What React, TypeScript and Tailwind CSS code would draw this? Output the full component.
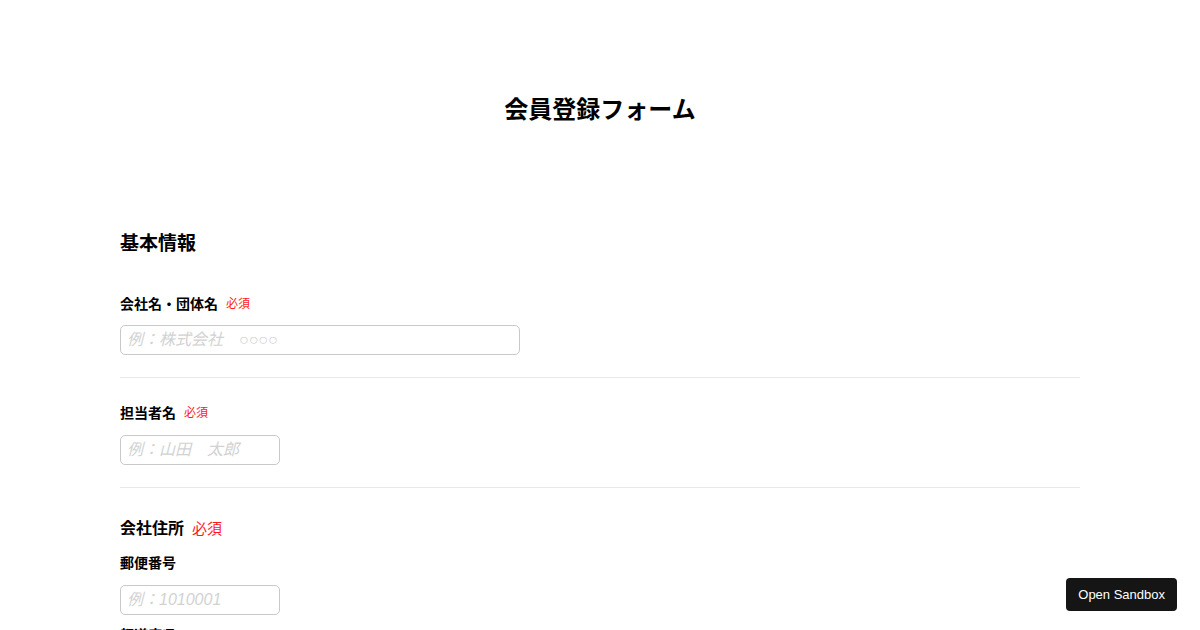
const FONT = { fontFamily: '"Liberation Sans", "Noto Sans CJK JP", sans-serif' }

function Required({ big }: { big?: boolean }) {
  return (
    <span className={`ml-2 font-normal text-[#ff1a1a] ${big ? 'text-[15px]' : 'text-[12px]'}`}>必須</span>
  )
}

function Label({ children, required }: { children: React.ReactNode; required?: boolean }) {
  return (
    <div className="flex h-5 items-center text-[14px] font-bold leading-5 text-black">
      {children}
      {required && <Required />}
    </div>
  )
}

function Input({ placeholder, wide }: { placeholder: string; wide?: boolean }) {
  return (
    <input
      type="text"
      placeholder={placeholder}
      className={`h-[30px] rounded-[5px] border border-[#c9c9c9] bg-white px-[6px] text-[16px] placeholder:italic placeholder:text-[#d2d2d2] focus:outline-none ${
        wide ? 'w-[400px]' : 'w-[160px]'
      }`}
      style={FONT}
    />
  )
}

export default function App() {
  return (
    <div className="min-h-[630px] bg-white text-black" style={FONT}>
      <div className="mx-auto w-[960px] pt-[94px]">
        <h1 className="h-8 text-center text-[24px] font-bold leading-8">会員登録フォーム</h1>

        <h2 className="mt-[105px] h-[26px] text-[19px] font-bold leading-[26px]">基本情報</h2>

        <div className="mt-[37px]">
          <Label required>会社名・団体名</Label>
          <div className="mt-[11px]">
            <Input wide placeholder="例：株式会社　○○○○" />
          </div>
        </div>

        <hr className="mt-[22px] border-t border-[#e8e8e8]" />

        <div className="mt-[25px]">
          <Label required>担当者名</Label>
          <div className="mt-[12px]">
            <Input placeholder="例：山田　太郎" />
          </div>
        </div>

        <hr className="mt-[22px] border-t border-[#e8e8e8]" />

        <div className="mt-[29px]">
          <h3 className="flex h-6 items-center text-[16px] font-bold leading-6">
            会社住所
            <Required big />
          </h3>
          <div className="mt-[12px]">
            <Label>郵便番号</Label>
            <div className="mt-[12px]">
              <Input placeholder="例：1010001" />
            </div>
          </div>
          <div className="mt-[10px]">
            <Label>都道府県</Label>
            <div className="mt-[12px]">
              <Input placeholder="例：東京都" />
            </div>
          </div>
        </div>
      </div>

      <button
        className="fixed bottom-[19px] right-[23px] h-[33px] rounded-[4px] bg-[#151515] px-[12px] text-[13px] text-white"
        style={{ fontFamily: '"Liberation Sans", Arial, sans-serif' }}
      >
        Open Sandbox
      </button>
    </div>
  )
}
